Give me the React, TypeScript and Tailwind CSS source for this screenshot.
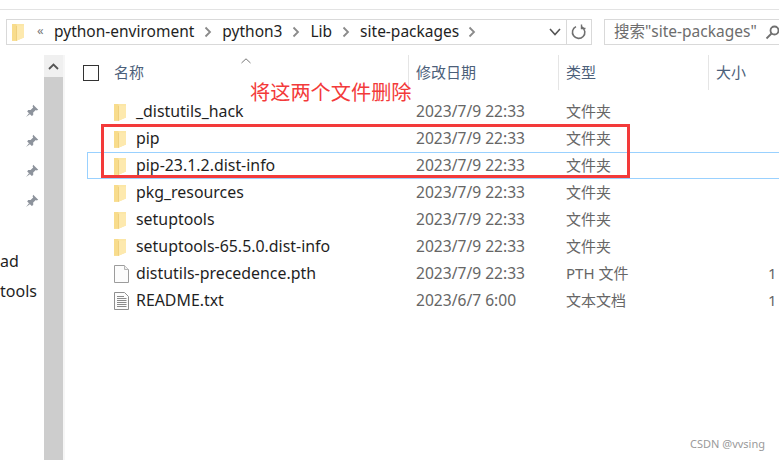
import { ReactElement } from "react"

const FONT = "font-['Noto_Sans','Noto_Sans_CJK_SC',sans-serif]"

type Row = { name: string, date: string, type: string, size?: string, icon: "folder" | "file" | "text", hover?: boolean }

const rows: Row[] = [
    { name: "_distutils_hack", date: "2023/7/9 22:33", type: "文件夹", icon: "folder" },
    { name: "pip", date: "2023/7/9 22:33", type: "文件夹", icon: "folder" },
    { name: "pip-23.1.2.dist-info", date: "2023/7/9 22:33", type: "文件夹", icon: "folder", hover: true },
    { name: "pkg_resources", date: "2023/7/9 22:33", type: "文件夹", icon: "folder" },
    { name: "setuptools", date: "2023/7/9 22:33", type: "文件夹", icon: "folder" },
    { name: "setuptools-65.5.0.dist-info", date: "2023/7/9 22:33", type: "文件夹", icon: "folder" },
    { name: "distutils-precedence.pth", date: "2023/7/9 22:33", type: "PTH 文件", size: "1", icon: "file" },
    { name: "README.txt", date: "2023/6/7 6:00", type: "文本文档", size: "1", icon: "text" },
]

function FolderIcon({ className = "" }: { className?: string }) {
    return (
        <svg width="13" height="18" viewBox="0 0 13 18" className={className}>
            <path d="M0 1 H12 V14.5 L4.5 17.8 H0 Z" fill="#fbe6a6" />
            <path d="M0 1 H4.5 V17.8 H0 Z" fill="#f8dc8c" />
            <path d="M4.5 2.8 H12 V14.5 L4.5 17.8 Z" fill="#fde9ae" />
            <path d="M4.5 2.8 V17.8" stroke="#e9c76f" strokeWidth="0.7" />
        </svg>
    )
}

function FileIcon() {
    return (
        <svg width="16" height="18" viewBox="0 0 16 18">
            <path d="M0.5 0.5 H10.5 L14.5 4.5 V17.5 H0.5 Z" fill="#fcfcfc" stroke="#9c9c9c" />
            <path d="M10.5 0.5 V4.5 H14.5" fill="#eee" stroke="#b5b5b5" />
        </svg>
    )
}

function TextIcon() {
    return (
        <svg width="16" height="18" viewBox="0 0 16 18">
            <path d="M0.5 0.5 H10.5 L14.5 4.5 V17.5 H0.5 Z" fill="#fcfcfc" stroke="#8f8f8f" />
            <path d="M3 4.5 H10 M3 6.5 H12.5 M3 8.5 H12.5 M3 10.5 H12.5 M3 12.5 H12.5 M3 14.5 H12.5" stroke="#8a8a8a" />
        </svg>
    )
}

function PinIcon() {
    return (
        <svg width="14" height="14" viewBox="0 0 14 14" fill="#8d939c">
            <path d="M8.2 0.8 L13.2 5.8 L11.8 6.6 L10.8 6 L8.2 8.6 L8.2 11 L6.8 12 L2.2 7.4 L3.2 6 L5.6 6 L8.2 3.4 L7.6 2.2 Z" />
            <path d="M4.2 9 L1 13 L5.2 10 Z" />
        </svg>
    )
}

function Chevron() {
    return (
        <svg width="8" height="12" viewBox="0 0 8 12" fill="none" stroke="#8a8a8a" strokeWidth="1.8">
            <path d="M1.5 1.5 L6 6 L1.5 10.5" />
        </svg>
    )
}

function AddressBar() {
    const crumbs = ["python-enviroment", "python3", "Lib", "site-packages"]
    return (
        <div className="flex items-center gap-[12px] h-[26px] ml-[6px] w-[790px]">
            <div className="flex items-center w-[586px] h-full border border-[#d9d9d9] shrink-0">
                <FolderIcon className="ml-[5px] shrink-0" />
                <span className="ml-[12px] w-[17px] text-[13px] leading-none text-[#7a7a7a] -mt-[3px]">«</span>
                <div className="flex items-center text-[15.5px] text-[#1f1f1f] whitespace-nowrap">
                    {crumbs.map((c, i) => (
                        <div className="flex items-center" key={i}>
                            <span>{c}</span>
                            <span className={i === 3 ? "ml-[9px]" : "mx-[10px]"}><Chevron /></span>
                        </div>
                    ))}
                </div>
                <div className="ml-auto flex items-center h-full">
                    <svg width="12" height="8" viewBox="0 0 12 8" fill="none" stroke="#555" strokeWidth="1.6" className="mr-[5px]">
                        <path d="M1 1 L6 6.5 L11 1" />
                    </svg>
                    <div className="w-[25px] h-full border-l border-[#d9d9d9] flex items-center justify-center">
                        <svg width="16" height="16" viewBox="0 0 16 16" fill="none" stroke="#707070" strokeWidth="1.6">
                            <path d="M11 3 A6.2 6.2 0 1 1 5 2.6" />
                            <path d="M10.5 0.5 V4.5 H14.5" strokeWidth="1.4" />
                        </svg>
                    </div>
                </div>
            </div>
            <div className="flex items-center w-[190px] h-full border border-[#d9d9d9] pl-[9px] shrink-0 overflow-hidden">
                <span className="text-[15.5px] text-[#6d6d6d] whitespace-nowrap">搜索"site-packages"</span>
                <svg width="15" height="15" viewBox="0 0 15 15" fill="none" stroke="#707070" strokeWidth="1.8" className="shrink-0 ml-[8px]">
                    <circle cx="9.5" cy="5.5" r="4" />
                    <path d="M6.5 8.5 L1.5 13.5" />
                </svg>
            </div>
        </div>
    )
}

function Sidebar() {
    return (
        <div className="flex w-[63px] shrink-0 h-full">
            <div className="w-[44px] relative text-[16px] text-[#1f1f1f] overflow-hidden">
                <div className="flex flex-col items-end pr-[5px] pt-[49px] gap-[16px]">
                    <PinIcon />
                    <PinIcon />
                    <PinIcon />
                    <PinIcon />
                </div>
                <div className="flex flex-col items-end mt-[38px]">
                    <div className="h-[30px] leading-[30px] w-full whitespace-nowrap pr-[28px] text-right">ad</div>
                    <div className="h-[30px] leading-[30px] w-full pr-[8px] text-right">tools</div>
                </div>
            </div>
            <div className="w-[19px] flex flex-col h-full">
                <div className="h-[22px] bg-[#f0f0f0] flex items-center justify-center shrink-0">
                    <svg width="11" height="7" viewBox="0 0 11 7" fill="none" stroke="#555" strokeWidth="1.8">
                        <path d="M1 6 L5.5 1.5 L10 6" />
                    </svg>
                </div>
                <div className="flex-1 bg-[#cdcdcd]" />
            </div>
        </div>
    )
}

function Header() {
    const cols = [
        { label: "修改日期", w: "w-[150px]" },
        { label: "类型", w: "w-[150px]" },
        { label: "大小", w: "w-[80px]" },
    ]
    return (
        <div className="flex h-[35px] items-stretch -ml-[3px] text-[15px] text-[#4c607a] whitespace-nowrap">
            <div className="w-[325px] shrink-0 flex items-center relative">
                <div className="w-[16px] h-[16px] border border-[#333]" />
                <span className="ml-[15px] -mt-[1px]">名称</span>
                <svg width="10" height="6" viewBox="0 0 10 6" fill="none" stroke="#777" className="absolute left-[158px] top-[3px]">
                    <path d="M0.5 5 L5 0.8 L9.5 5" />
                </svg>
            </div>
            {cols.map((c, i) => (
                <div className={`${c.w} shrink-0 border-l border-[#e5e5e5] pl-[7px] flex items-center`} key={i}>
                    <span className="-mt-[1px]">{c.label}</span>
                </div>
            ))}
        </div>
    )
}

function FileRow({ row }: { row: Row }): ReactElement {
    const icons = { folder: <FolderIcon />, file: <FileIcon />, text: <TextIcon /> }
    return (
        <div className={`flex items-center h-[27px] w-[712px] ml-[1px] pl-[27px] ${row.hover ? "outline outline-1 -outline-offset-1 outline-[#99d1ff]" : ""}`}>
            <div className="w-[22px] shrink-0 flex items-center">{icons[row.icon]}</div>
            <div className="w-[280px] shrink-0 text-[15.9px] text-[#1f1f1f] whitespace-nowrap">{row.name}</div>
            <div className="w-[150px] shrink-0 text-[15.6px] text-[#666]">{row.date}</div>
            <div className="w-[202px] shrink-0 text-[15px] text-[#666] whitespace-nowrap">{row.type}</div>
            <div className="text-[15px] text-[#666]">{row.size}</div>
        </div>
    )
}

export default function App() {
    return (
        <div className={`relative w-[779px] h-[460px] overflow-hidden bg-white ${FONT}`}>
            <div className="h-[10px] border-b border-[#e3e3e3]" />
            <div className="pt-[9px]">
                <AddressBar />
            </div>
            <div className="flex h-[405px] mt-[10px]">
                <Sidebar />
                <div className="flex-1 border-l-2 border-[#f6f6f6] pl-[21px] overflow-hidden">
                    <Header />
                    <div className="mt-[8px]">
                        {rows.map((r, i) => <FileRow row={r} key={i} />)}
                    </div>
                </div>
            </div>

            {/* red annotation drawn on top of the screenshot */}
            <div className="absolute left-[101px] top-[124px] w-[529px] h-[54px] border-[3px] border-[#f33a3a]" />
            <div className="absolute left-[250px] top-[78px] text-[20.2px] leading-[28px] text-[#f33a3a] whitespace-nowrap">将这两个文件删除</div>
            <div className="absolute left-[690px] top-[436px] text-[11px] leading-[16px] text-[#9a9a9a] whitespace-nowrap">CSDN @vvsing</div>
        </div>
    )
}
